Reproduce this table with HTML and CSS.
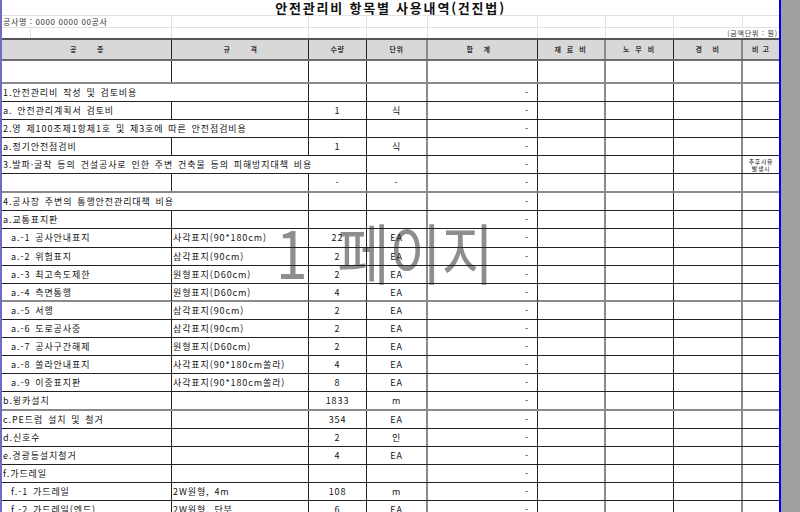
FILE: index.html
```html
<!DOCTYPE html>
<html lang="ko">
<head>
<meta charset="utf-8">
<title>안전관리비 항목별 사용내역(건진법)</title>
<link rel="stylesheet" href="styles.css">
</head>
<body>
<div class="screen">
  <div class="edge-left"></div>
  <div class="sheet">
    <div class="title">안전관리비 항목별 사용내역(건진법)</div>
    <div class="row info">
      <div class="lc wide">공사명 : 0000 0000 00공사</div>
      <div class="lc"></div><div class="lc"></div><div class="lc"></div><div class="lc"></div><div class="lc"></div><div class="lc"></div><div class="lc"></div><div class="lc end"></div>
    </div>
    <div class="row unit">
      <div class="lc split"><span class="stub"></span></div>
      <div class="lc"></div><div class="lc"></div><div class="lc"></div><div class="lc"></div><div class="lc"></div><div class="lc"></div>
      <div class="lc end span2 money">(금액단위 : 원)</div>
    </div>
    <div class="row head">
      <div class="c-name">공<span class="gap"></span>종</div>
      <div class="c-spec">규<span class="gap"></span>격</div>
      <div class="c-qty">수량</div>
      <div class="c-unit">단위</div>
      <div class="c-total">합<span class="gap-s"></span>계</div>
      <div class="c-mat">재 료 비</div>
      <div class="c-lab">노 무 비</div>
      <div class="c-exp">경<span class="gap-s"></span>비</div>
      <div class="c-note">비 고</div>
    </div>
    <div class="row blank thick"><div class="c-name"></div><div class="c-spec"></div><div class="c-qty"></div><div class="c-unit"></div><div class="c-total"></div><div class="c-mat"></div><div class="c-lab"></div><div class="c-exp"></div><div class="c-note"></div></div>

    <div class="body">
      <div class="watermark">1 페이지</div>

      <div class="row"><div class="c-name span2">1.안전관리비 작성 및 검토비용</div><div class="c-qty"></div><div class="c-unit"></div><div class="c-total">-</div><div class="c-mat"></div><div class="c-lab"></div><div class="c-exp"></div><div class="c-note"></div></div>
      <div class="row"><div class="c-name">a. 안전관리계획서 검토비</div><div class="c-spec"></div><div class="c-qty">1</div><div class="c-unit">식</div><div class="c-total">-</div><div class="c-mat"></div><div class="c-lab"></div><div class="c-exp"></div><div class="c-note"></div></div>
      <div class="row"><div class="c-name span2">2.영 제100조제1항제1호 및 제3호에 따른 안전점검비용</div><div class="c-qty"></div><div class="c-unit"></div><div class="c-total">-</div><div class="c-mat"></div><div class="c-lab"></div><div class="c-exp"></div><div class="c-note"></div></div>
      <div class="row"><div class="c-name">a.정기안전점검비</div><div class="c-spec"></div><div class="c-qty">1</div><div class="c-unit">식</div><div class="c-total">-</div><div class="c-mat"></div><div class="c-lab"></div><div class="c-exp"></div><div class="c-note"></div></div>
      <div class="row"><div class="c-name span3">3.발파·굴착 등의 건설공사로 인한 주변 건축물 등의 피해방지대책 비용</div><div class="c-unit"></div><div class="c-total">-</div><div class="c-mat"></div><div class="c-lab"></div><div class="c-exp"></div><div class="c-note small">추후사유<br>발생시</div></div>
      <div class="row tall thick"><div class="c-name"></div><div class="c-spec"></div><div class="c-qty">-</div><div class="c-unit">-</div><div class="c-total">-</div><div class="c-mat"></div><div class="c-lab"></div><div class="c-exp"></div><div class="c-note"></div></div>
      <div class="row"><div class="c-name span2">4.공사장 주변의 통행안전관리대책 비용</div><div class="c-qty"></div><div class="c-unit"></div><div class="c-total">-</div><div class="c-mat"></div><div class="c-lab"></div><div class="c-exp"></div><div class="c-note"></div></div>
      <div class="row"><div class="c-name">a.교통표지판</div><div class="c-spec"></div><div class="c-qty"></div><div class="c-unit"></div><div class="c-total">-</div><div class="c-mat"></div><div class="c-lab"></div><div class="c-exp"></div><div class="c-note"></div></div>
      <div class="row tall"><div class="c-name sub">a.-1 공사안내표지</div><div class="c-spec">사각표지(90*180cm)</div><div class="c-qty">22</div><div class="c-unit">EA</div><div class="c-total">-</div><div class="c-mat"></div><div class="c-lab"></div><div class="c-exp"></div><div class="c-note"></div></div>
      <div class="row"><div class="c-name sub">a.-2 위험표지</div><div class="c-spec">삼각표지(90cm)</div><div class="c-qty">2</div><div class="c-unit">EA</div><div class="c-total">-</div><div class="c-mat"></div><div class="c-lab"></div><div class="c-exp"></div><div class="c-note"></div></div>
      <div class="row"><div class="c-name sub">a.-3 최고속도제한</div><div class="c-spec">원형표지(D60cm)</div><div class="c-qty">2</div><div class="c-unit">EA</div><div class="c-total">-</div><div class="c-mat"></div><div class="c-lab"></div><div class="c-exp"></div><div class="c-note"></div></div>
      <div class="row thick"><div class="c-name sub">a.-4 측면통행</div><div class="c-spec">원형표지(D60cm)</div><div class="c-qty">4</div><div class="c-unit">EA</div><div class="c-total">-</div><div class="c-mat"></div><div class="c-lab"></div><div class="c-exp"></div><div class="c-note"></div></div>
      <div class="row"><div class="c-name sub">a.-5 서행</div><div class="c-spec">삼각표지(90cm)</div><div class="c-qty">2</div><div class="c-unit">EA</div><div class="c-total">-</div><div class="c-mat"></div><div class="c-lab"></div><div class="c-exp"></div><div class="c-note"></div></div>
      <div class="row"><div class="c-name sub">a.-6 도로공사중</div><div class="c-spec">삼각표지(90cm)</div><div class="c-qty">2</div><div class="c-unit">EA</div><div class="c-total">-</div><div class="c-mat"></div><div class="c-lab"></div><div class="c-exp"></div><div class="c-note"></div></div>
      <div class="row"><div class="c-name sub">a.-7 공사구간해제</div><div class="c-spec">원형표지(D60cm)</div><div class="c-qty">2</div><div class="c-unit">EA</div><div class="c-total">-</div><div class="c-mat"></div><div class="c-lab"></div><div class="c-exp"></div><div class="c-note"></div></div>
      <div class="row"><div class="c-name sub">a.-8 쏠라안내표지</div><div class="c-spec">사각표지(90*180cm쏠라)</div><div class="c-qty">4</div><div class="c-unit">EA</div><div class="c-total">-</div><div class="c-mat"></div><div class="c-lab"></div><div class="c-exp"></div><div class="c-note"></div></div>
      <div class="row"><div class="c-name sub">a.-9 이중표지판</div><div class="c-spec">사각표지(90*180cm쏠라)</div><div class="c-qty">8</div><div class="c-unit">EA</div><div class="c-total">-</div><div class="c-mat"></div><div class="c-lab"></div><div class="c-exp"></div><div class="c-note"></div></div>
      <div class="row tall thick"><div class="c-name">b.윙카설치</div><div class="c-spec"></div><div class="c-qty">1833</div><div class="c-unit">m</div><div class="c-total">-</div><div class="c-mat"></div><div class="c-lab"></div><div class="c-exp"></div><div class="c-note"></div></div>
      <div class="row"><div class="c-name">c.PE드럼 설치 및 철거</div><div class="c-spec"></div><div class="c-qty">354</div><div class="c-unit">EA</div><div class="c-total">-</div><div class="c-mat"></div><div class="c-lab"></div><div class="c-exp"></div><div class="c-note"></div></div>
      <div class="row"><div class="c-name">d.신호수</div><div class="c-spec"></div><div class="c-qty">2</div><div class="c-unit">인</div><div class="c-total">-</div><div class="c-mat"></div><div class="c-lab"></div><div class="c-exp"></div><div class="c-note"></div></div>
      <div class="row"><div class="c-name">e.경광등설치철거</div><div class="c-spec"></div><div class="c-qty">4</div><div class="c-unit">EA</div><div class="c-total">-</div><div class="c-mat"></div><div class="c-lab"></div><div class="c-exp"></div><div class="c-note"></div></div>
      <div class="row"><div class="c-name">f.가드레일</div><div class="c-spec"></div><div class="c-qty"></div><div class="c-unit"></div><div class="c-total">-</div><div class="c-mat"></div><div class="c-lab"></div><div class="c-exp"></div><div class="c-note"></div></div>
      <div class="row"><div class="c-name sub">f.-1 가드레일</div><div class="c-spec">2W원형, 4m</div><div class="c-qty">108</div><div class="c-unit">m</div><div class="c-total">-</div><div class="c-mat"></div><div class="c-lab"></div><div class="c-exp"></div><div class="c-note"></div></div>
      <div class="row"><div class="c-name sub">f.-2 가드레일(엔드)</div><div class="c-spec">2W원형, 단부</div><div class="c-qty">6</div><div class="c-unit">EA</div><div class="c-total">-</div><div class="c-mat"></div><div class="c-lab"></div><div class="c-exp"></div><div class="c-note"></div></div>
    </div>
  </div>
  <div class="edge-right"></div>
  <div class="outside"></div>
</div>
</body>
</html>
```

FILE: styles.css
```css
* { box-sizing: border-box; }
html, body { margin: 0; padding: 0; }
body {
  width: 800px;
  height: 512px;
  overflow: hidden;
  background: #fff;
  font-family: "Noto Sans CJK KR", "Noto Sans", sans-serif;
  color: #141414;
}
.screen {
  display: flex;
  height: 512px;
}
.edge-left { width: 2px; background: #6c6cc8; flex: none; }
.edge-right { width: 2px; background: #0000f0; flex: none; }
.outside { flex: 1; background: #a0a0a0; }
.sheet { width: 777px; flex: none; overflow: hidden; }

.title {
  height: 16px;
  border-bottom: 1px solid #e2e2e2;
  text-align: center;
  font-size: 13px;
  font-weight: bold;
  line-height: 16px;
  letter-spacing: 1.8px;
  color: #111;
}

.row {
  display: grid;
  grid-template-columns: 170px 137px 58px 61px 110px 68px 68px 69px 36px;
  height: 18px;
  border-bottom: 1px solid #222;
  font-size: 9px;
  line-height: 17px;
  letter-spacing: 0.9px;
  word-spacing: 1.5px;
  white-space: nowrap;
}
.row.tall { height: 19px; }
.row.thick { border-bottom: 2px solid #8a8a8a; }

.row > div { overflow: visible; }

.info { height: 12px; border-bottom: 1px solid #e2e2e2; font-size: 8px; line-height: 11px; letter-spacing: 0.6px; word-spacing: 0; }
.unit { height: 10px; border-bottom: none; font-size: 7px; line-height: 10px; letter-spacing: 0.8px; word-spacing: 0; }
.lc { border-right: 1px solid #e2e2e2; }
.lc.end { border-right: none; }
.lc.wide { padding-left: 1px; color: #333; }
.split { display: flex; }
.stub { width: 29px; border-right: 1px solid #e2e2e2; }
.span2 { grid-column: span 2; }
.span3 { grid-column: span 3; }
.money { text-align: right; padding-right: 1px; color: #333; }

.head {
  height: 23px;
  background: #d8d8d8;
  border-top: 2px solid #555;
  border-bottom: 2px solid #6c6c6c;
  font-size: 7px;
  font-weight: bold;
  line-height: 19px;
  letter-spacing: 0.5px;
  word-spacing: 0;
  text-align: center;
  color: #333;
}
.head > div { text-align: center; }
.head .c-mat, .head .c-lab { letter-spacing: 2px; }
.head .c-note { letter-spacing: 1px; }
.gap { display: inline-block; width: 20px; }
.gap-s { display: inline-block; width: 10px; }

.blank { height: 23px; }

.c-name, .c-spec, .c-qty { border-right: 1px solid #222; }
.c-unit { border-right: 2px solid #8a8a8a; }
.c-total { border-right: 1px solid #222; }
.c-mat { border-right: 2px solid #8a8a8a; }
.c-lab { border-right: 1px solid #222; }
.c-exp { border-right: 2px solid #8a8a8a; }
.c-note { border-right: none; }

.c-name { padding-left: 1px; }
.c-name.sub { padding-left: 9px; }
.c-spec { padding-left: 1px; }
.c-qty, .c-unit { text-align: center; }
.c-total { text-align: right; padding-right: 8px; }
.c-note.small {
  font-size: 6px;
  line-height: 7px;
  letter-spacing: 0.6px;
  text-align: center;
  padding-top: 2px;
}

.body { position: relative; }
.body .row { position: relative; z-index: 1; }
.watermark {
  position: absolute;
  left: 274px;
  top: 133px;
  z-index: 0;
  font-size: 66px;
  line-height: 66px;
  letter-spacing: 0;
  word-spacing: 16px;
  color: #8e8e8e;
  white-space: nowrap;
  font-family: "Noto Sans CJK KR", sans-serif;
  font-weight: 400;
  transform: scaleX(0.86);
  transform-origin: left top;
}
```
